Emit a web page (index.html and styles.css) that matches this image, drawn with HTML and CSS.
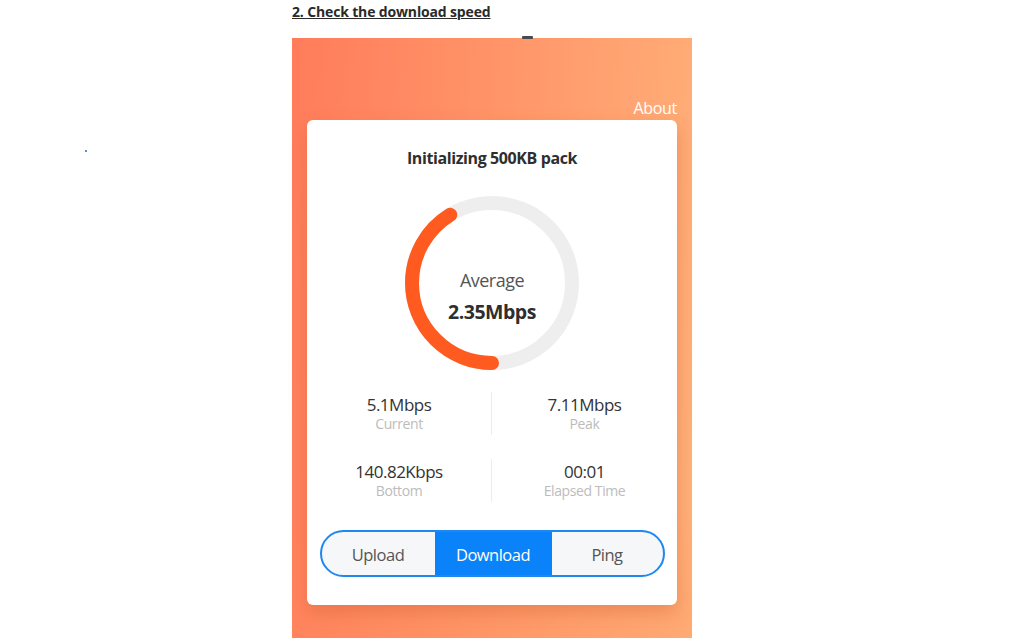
FILE: index.html
```html
<!DOCTYPE html>
<html>
<head>
<meta charset="utf-8">
<link rel="stylesheet" href="styles.css">
</head>
<body>
<div class="page">
  <span class="dot"></span>
  <h2 class="heading">2. Check the download speed</h2>
  <div class="panel">
    <span class="notch"></span>
    <div class="about">About</div>
    <div class="card">
      <div class="title">Initializing 500KB pack</div>
      <div class="gauge">
        <svg class="ring" width="176" height="176" viewBox="0 0 176 176">
          <circle cx="88" cy="88" r="80" fill="none" stroke="#eeeeee" stroke-width="14"/>
          <circle cx="88" cy="88" r="80" fill="none" stroke="#ff5a1f" stroke-width="14" stroke-linecap="round"
            stroke-dasharray="207 503" transform="rotate(90 88 88)"/>
        </svg>
        <div class="gauge-text">
          <div class="avg-label">Average</div>
          <div class="avg-value">2.35Mbps</div>
        </div>
      </div>
      <div class="stats">
        <div class="stat">
          <div class="val">5.1Mbps</div>
          <div class="lbl">Current</div>
        </div>
        <div class="stat">
          <div class="val">7.11Mbps</div>
          <div class="lbl">Peak</div>
        </div>
        <div class="stat">
          <div class="val">140.82Kbps</div>
          <div class="lbl">Bottom</div>
        </div>
        <div class="stat">
          <div class="val">00:01</div>
          <div class="lbl">Elapsed Time</div>
        </div>
      </div>
      <div class="tabs">
        <div class="tab">Upload</div>
        <div class="tab active">Download</div>
        <div class="tab">Ping</div>
      </div>
    </div>
  </div>
</div>
</body>
</html>
```

FILE: styles.css
```css
* { box-sizing: border-box; }
html, body { margin: 0; padding: 0; background: #ffffff; overflow: hidden; }
body { font-family: "Open Sans", "Noto Sans", sans-serif; height: 638px; }

.page {
  position: relative;
  padding-left: 292px;
  padding-top: 2px;
}

.dot {
  position: absolute;
  left: 85px;
  top: 150px;
  width: 2px;
  height: 2px;
  background: #5b8fd8;
}

.heading {
  margin: 0;
  font-size: 14px;
  font-weight: 700;
  color: #2a2a2a;
  text-decoration: underline;
  letter-spacing: -0.15px;
  line-height: 19px;
}

.panel {
  position: relative;
  margin-top: 17px;
  width: 400px;
  height: 620px;
  background:
    linear-gradient(180deg, rgba(255,255,255,0) 75%, rgba(255,140,90,0.25) 100%),
    linear-gradient(95deg, #ff7c5b 0%, #ff9468 45%, #ffb27b 100%);
  padding: 60px 15px 0 15px;
}

.notch {
  position: absolute;
  left: 230px;
  top: -2px;
  width: 11px;
  height: 3px;
  background: #4a4a4a;
  border-radius: 1px;
}

.about {
  text-align: right;
  color: #ffffff;
  font-size: 16px;
  line-height: 20px;
  letter-spacing: -0.3px;
}

.card {
  margin-top: 2px;
  height: 485px;
  background: #ffffff;
  border-radius: 6px;
  box-shadow: 0 8px 18px rgba(200, 90, 40, 0.35);
  padding: 27px 0 0 0;
  display: flex;
  flex-direction: column;
  align-items: center;
}

.title {
  font-size: 16px;
  font-weight: 700;
  color: #2e2e2e;
  letter-spacing: -0.4px;
  line-height: 22px;
}

.gauge {
  position: relative;
  margin-top: 26px;
  width: 176px;
  height: 176px;
}

.ring { display: block; }

.gauge-text {
  position: absolute;
  inset: 0;
  display: flex;
  flex-direction: column;
  align-items: center;
  justify-content: center;
  padding-top: 26px;
}

.avg-label {
  font-size: 18px;
  color: #555555;
  letter-spacing: -0.5px;
  line-height: 24px;
}

.avg-value {
  margin-top: 8px;
  font-size: 19.5px;
  font-weight: 700;
  color: #2e2e2e;
  letter-spacing: -0.5px;
  line-height: 24px;
}

.stats {
  margin-top: 21px;
  width: 100%;
  display: grid;
  grid-template-columns: 1fr 1fr;
  row-gap: 24px;
}

.stat {
  text-align: center;
  padding: 3px 0 2px;
}

.stat:nth-child(odd) {
  border-right: 1px solid #ececec;
}

.val {
  font-size: 17px;
  font-weight: 500;
  color: #333333;
  letter-spacing: -0.5px;
  line-height: 20px;
}

.lbl {
  font-size: 14px;
  color: #bcbcbc;
  letter-spacing: -0.4px;
  line-height: 18px;
  margin-top: 0;
}

.tabs {
  margin-top: 28px;
  width: 345px;
  height: 47px;
  border: 2px solid #1e88f0;
  border-radius: 24px;
  display: flex;
  overflow: hidden;
  background: #f6f7f9;
}

.tab {
  flex: 1;
  display: flex;
  align-items: center;
  justify-content: center;
  font-size: 16.5px;
  color: #555555;
  letter-spacing: -0.5px;
  padding-top: 1px;
}

.tab:first-child { flex: 0 0 113px; }
.tab:last-child { flex: 1; }

.tab.active {
  flex: 0 0 117px;
  background: #0a82fa;
  color: #ffffff;
}
```
